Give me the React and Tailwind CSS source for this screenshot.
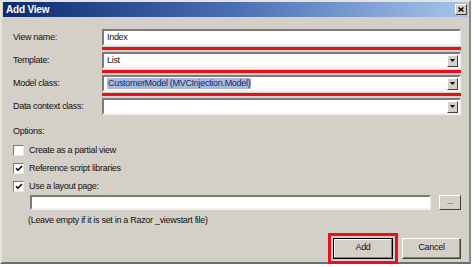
import React from 'react';

function Caret() {
  return (
    <div className="w-[11px] h-[12px] bg-[#d4d0c8] border border-t-white border-l-white border-b-[#404040] border-r-[#404040] flex items-center justify-center">
      <svg width="5" height="3" viewBox="0 0 5 3"><path d="M0 0h5L2.5 3z" fill="#000" /></svg>
    </div>
  );
}

function Field({ children, combo, selected }) {
  return (
    <div className="h-[17px] bg-white border-2 border-t-[#7a7a7a] border-l-[#7a7a7a] border-b-[#f0f0f0] border-r-[#f0f0f0] flex items-center pl-[3px] pr-px">
      <div className="flex-1 flex items-center">
        {selected ? (
          <span className="bg-[#a9b7d9] text-[#1b2e6e] px-px leading-[11px]">{children}</span>
        ) : (
          <span>{children}</span>
        )}
      </div>
      {combo && <Caret />}
    </div>
  );
}

function Check({ checked, label }) {
  return (
    <div className="flex items-center gap-[5px] h-[17px]">
      <div className="w-[11px] h-[11px] bg-white border border-t-[#7a7a7a] border-l-[#7a7a7a] border-b-[#e8e8e8] border-r-[#e8e8e8] flex items-center justify-center">
        {checked && (
          <svg width="8" height="7" viewBox="0 0 8 7"><path d="M1 3.2l2 2 4-4.2" stroke="#000" strokeWidth="1.6" fill="none" /></svg>
        )}
      </div>
      <span>{label}</span>
    </div>
  );
}

export default function App() {
  const rows = [
    { label: 'View name:', value: 'Index', combo: false, red: true },
    { label: 'Template:', value: 'List', combo: true, red: true },
    { label: 'Model class:', value: 'CustomerModel (MVCInjection.Model)', combo: true, red: true, selected: true },
    { label: 'Data context class:', value: '', combo: true, red: false },
  ];

  return (
    <div className="w-[474px] h-[267px] bg-white overflow-hidden text-[9px] tracking-[-0.3px] text-[#111]" style={{ fontFamily: '"Liberation Sans", Arial, sans-serif' }}>
      <div className="w-[471px] h-[264px] bg-[#d4d0c8] border-2 border-t-[#e6e3dc] border-l-[#e6e3dc] border-b-[#6e6e6e] border-r-[#8a8a8a] flex flex-col">
        <div className="h-[16px] mx-px bg-gradient-to-r from-[#0c2a72] via-[#4a70b4] to-[#a8c6ec] flex items-center justify-between pl-[3px] pr-[1px]">
          <span className="text-white font-bold text-[10px] tracking-[-0.2px]">Add View</span>
          <div className="w-[12px] h-[11px] bg-[#d4d0c8] border border-t-white border-l-white border-b-[#404040] border-r-[#404040] flex items-center justify-center">
            <svg width="6" height="5" viewBox="0 0 6 5"><path d="M0.5 0.5l5 4M5.5 0.5l-5 4" stroke="#000" strokeWidth="1.4" /></svg>
          </div>
        </div>

        <div className="flex flex-col pl-[11px] pr-[8px] pt-[12px]">
          {rows.map((r) => (
            <div key={r.label} className="h-[23px] grid grid-cols-[89px_1fr]">
              <div className="h-[17px] flex items-center">{r.label}</div>
              <div className="flex flex-col">
                <Field combo={r.combo} selected={r.selected}>{r.value}</Field>
                {r.red && <div className="h-[3px] mt-px bg-[#e8101a]" />}
              </div>
            </div>
          ))}

          <div className="h-[17px] flex items-center mt-[2px]">Options:</div>
          <div className="flex flex-col gap-[1px] mt-[2px]">
            <Check label="Create as a partial view" />
            <Check checked label="Reference script libraries" />
            <Check checked label="Use a layout page:" />
          </div>

          <div className="flex items-center gap-[8px] pl-[17px]">
            <div className="flex-1 h-[15px] bg-white border-2 border-t-[#7a7a7a] border-l-[#7a7a7a] border-b-[#f0f0f0] border-r-[#f0f0f0]" />
            <div className="w-[22px] h-[15px] bg-[#d4d0c8] border border-t-white border-l-white border-b-[#404040] border-r-[#404040] flex items-end justify-center pb-[3px] text-[8px] leading-none">...</div>
          </div>
          <div className="pl-[15px] mt-[4px]">(Leave empty if it is set in a Razor _viewstart file)</div>

          <div className="flex justify-end items-center gap-[4px] mt-[5px]">
            <div className="border-[3px] border-[#e8101a] p-[2px]">
              <div className="w-[60px] h-[21px] bg-[#d4d0c8] border border-[#000] flex items-center justify-center shadow-[inset_-1px_-1px_0_#808080,inset_1px_1px_0_#fff]">Add</div>
            </div>
            <div className="w-[59px] h-[21px] bg-[#d4d0c8] border border-t-white border-l-white border-b-[#404040] border-r-[#404040] flex items-center justify-center shadow-[inset_-1px_-1px_0_#808080]">Cancel</div>
          </div>
        </div>
      </div>
    </div>
  );
}
